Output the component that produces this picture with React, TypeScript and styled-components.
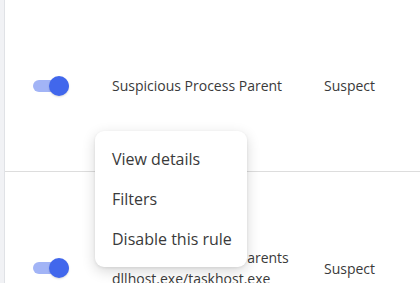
import styled, { createGlobalStyle } from "styled-components";

const GlobalStyle = createGlobalStyle`
  html, body {
    margin: 0;
    padding: 0;
    background: #fff;
  }
  body {
    font-family: "Open Sans", "Liberation Sans", sans-serif;
    color: #3a3a3a;
    overflow: hidden;
  }
`;

const Page = styled.div`
  position: relative;
  display: flex;
  width: 420px;
  height: 283px;
  overflow: hidden;
`;

const SideStrip = styled.div`
  flex: 0 0 4px;
  background: #f1f2f5;
  border-right: 1px solid #e0e2e6;
`;

const Table = styled.div`
  flex: 1;
  display: flex;
  flex-direction: column;
`;

const Row = styled.div<{ $height: number; $divider?: boolean }>`
  display: flex;
  align-items: center;
  flex: 0 0 ${p => p.$height}px;
  border-bottom: ${p => (p.$divider ? "1px solid #dddddd" : "none")};
`;

const ToggleCell = styled.div`
  flex: 0 0 107px;
  padding-left: 28px;
  box-sizing: border-box;
`;

const NameCell = styled.div`
  flex: 0 0 212px;
  padding-right: 20px;
  box-sizing: border-box;
  font-size: 14px;
  line-height: 21px;
`;

const StatusCell = styled.div`
  flex: 1;
  font-size: 14px;
  line-height: 21px;
`;

const Track = styled.div`
  position: relative;
  width: 36px;
  height: 12px;
  border-radius: 6px;
  background: #a2b4f6;
`;

const Knob = styled.div`
  position: absolute;
  right: 0;
  top: -4px;
  width: 20px;
  height: 20px;
  border-radius: 50%;
  background: #4167ec;
  box-shadow: 0 1px 2px rgba(0, 0, 0, 0.15);
`;

const Menu = styled.ul`
  position: absolute;
  left: 95px;
  top: 131px;
  width: 152px;
  margin: 0;
  padding: 8px 0;
  list-style: none;
  background: #fff;
  border-radius: 9px;
  box-shadow: 0 4px 14px rgba(0, 0, 0, 0.16), 0 1px 3px rgba(0, 0, 0, 0.08);
`;

const MenuItem = styled.li`
  padding-left: 17px;
  font-size: 16px;
  line-height: 40px;
  color: #3a3a3a;
  white-space: nowrap;
`;

function Toggle() {
  return (
    <Track>
      <Knob />
    </Track>
  );
}

const rules = [
  { name: "Suspicious Process Parent", status: "Suspect", height: 171, divider: true },
  {
    name: "Suspicious Process Parents dllhost.exe/taskhost.exe",
    status: "Suspect",
    height: 192,
    divider: false,
  },
];

export default function App() {
  return (
    <>
      <GlobalStyle />
      <Page>
        <SideStrip />
        <Table>
          {rules.map(rule => (
            <Row key={rule.name} $height={rule.height} $divider={rule.divider}>
              <ToggleCell>
                <Toggle />
              </ToggleCell>
              <NameCell>{rule.name}</NameCell>
              <StatusCell>{rule.status}</StatusCell>
            </Row>
          ))}
        </Table>
        <Menu>
          <MenuItem>View details</MenuItem>
          <MenuItem>Filters</MenuItem>
          <MenuItem>Disable this rule</MenuItem>
        </Menu>
      </Page>
    </>
  );
}
